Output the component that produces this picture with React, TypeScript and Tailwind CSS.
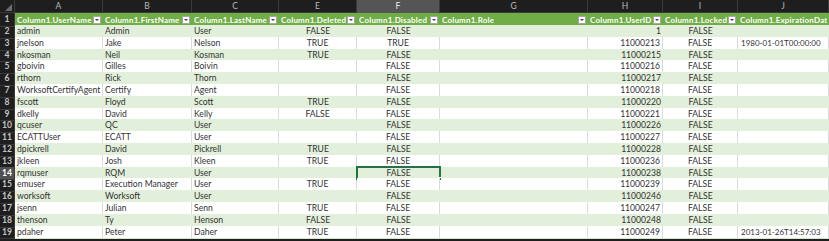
type Row = {
  n: number;
  a: string;
  b: string;
  c: string;
  e: string;
  f: string;
  h: string;
  i: string;
  j: string;
};

const rows: Row[] = [
  { n: 2, a: "admin", b: "Admin", c: "User", e: "FALSE", f: "FALSE", h: "1", i: "FALSE", j: "" },
  { n: 3, a: "jnelson", b: "Jake", c: "Nelson", e: "TRUE", f: "TRUE", h: "11000213", i: "FALSE", j: "1980-01-01T00:00:00" },
  { n: 4, a: "nkosman", b: "Neil", c: "Kosman", e: "TRUE", f: "FALSE", h: "11000215", i: "FALSE", j: "" },
  { n: 5, a: "gboivin", b: "Gilles", c: "Boivin", e: "", f: "FALSE", h: "11000216", i: "FALSE", j: "" },
  { n: 6, a: "rthorn", b: "Rick", c: "Thorn", e: "", f: "FALSE", h: "11000217", i: "FALSE", j: "" },
  { n: 7, a: "WorksoftCertifyAgent", b: "Certify", c: "Agent", e: "", f: "FALSE", h: "11000218", i: "FALSE", j: "" },
  { n: 8, a: "fscott", b: "Floyd", c: "Scott", e: "TRUE", f: "FALSE", h: "11000220", i: "FALSE", j: "" },
  { n: 9, a: "dkelly", b: "David", c: "Kelly", e: "FALSE", f: "FALSE", h: "11000221", i: "FALSE", j: "" },
  { n: 10, a: "qcuser", b: "QC", c: "User", e: "", f: "FALSE", h: "11000226", i: "FALSE", j: "" },
  { n: 11, a: "ECATTUser", b: "ECATT", c: "User", e: "", f: "FALSE", h: "11000227", i: "FALSE", j: "" },
  { n: 12, a: "dpickrell", b: "David", c: "Pickrell", e: "TRUE", f: "FALSE", h: "11000228", i: "FALSE", j: "" },
  { n: 13, a: "jkleen", b: "Josh", c: "Kleen", e: "TRUE", f: "FALSE", h: "11000236", i: "FALSE", j: "" },
  { n: 14, a: "rqmuser", b: "RQM", c: "User", e: "", f: "FALSE", h: "11000238", i: "FALSE", j: "" },
  { n: 15, a: "emuser", b: "Execution Manager", c: "User", e: "TRUE", f: "FALSE", h: "11000239", i: "FALSE", j: "" },
  { n: 16, a: "worksoft", b: "Worksoft", c: "User", e: "", f: "FALSE", h: "11000246", i: "FALSE", j: "" },
  { n: 17, a: "jsenn", b: "Julian", c: "Senn", e: "TRUE", f: "FALSE", h: "11000247", i: "FALSE", j: "" },
  { n: 18, a: "thenson", b: "Ty", c: "Henson", e: "FALSE", f: "FALSE", h: "11000248", i: "FALSE", j: "" },
  { n: 19, a: "pdaher", b: "Peter", c: "Daher", e: "TRUE", f: "FALSE", h: "11000249", i: "FALSE", j: "2013-01-26T14:57:03" },
];

const grid =
  "grid grid-cols-[15px_88px_89px_87px_78px_83px_148px_75px_75px_1fr]";

const letters = ["A", "B", "C", "E", "F", "G", "H", "I", "J"];
const headers = [
  "Column1.UserName",
  "Column1.FirstName",
  "Column1.LastName",
  "Column1.Deleted",
  "Column1.Disabled",
  "Column1.Role",
  "Column1.UserID",
  "Column1.Locked",
  "Column1.ExpirationDate",
];

const Dropdown = () => (
  <span className="flex h-[8px] w-[8px] shrink-0 items-center justify-center border border-[#a6a6a6] bg-white">
    <span className="h-0 w-0 border-l-[2px] border-r-[2px] border-t-[2.5px] border-l-transparent border-r-transparent border-t-[#444]" />
  </span>
);

const App = () => {
  return (
    <div className="h-[241px] w-[829px] overflow-hidden bg-[#1e1e1e] font-['Lato','Liberation_Sans',sans-serif] text-[8.6px]">
      {/* column letters */}
      <div className={`${grid} h-[13px] border-b border-[#3a3a3a]`}>
        <div className="flex items-end justify-end border-r border-[#3a3a3a] p-[2px]">
          <span className="h-0 w-0 border-b-[7px] border-l-[7px] border-b-[#6b6b6b] border-l-transparent" />
        </div>
        {letters.map((l) => (
          <div
            key={l}
            className={`flex items-center justify-center border-r border-[#3a3a3a] text-[8.5px] ${
              l === "F" ? "bg-[#555555] text-[#e8e8e8]" : "text-[#b8b8b8]"
            }`}
          >
            {l}
          </div>
        ))}
      </div>

      {/* table header row */}
      <div className={`${grid} h-[12px]`}>
        <div className="flex items-center justify-center border-b border-r border-[#3a3a3a] font-bold text-[#c4c4c4]">
          1
        </div>
        {headers.map((h, idx) => (
          <div
            key={h}
            className="flex items-center justify-between gap-[1px] overflow-hidden whitespace-nowrap bg-[#70ad47] pl-[2px] pr-[2px] text-[8px] font-bold tracking-[0.2px] text-white"
          >
            <span className="overflow-hidden">{h}</span>
            {idx < headers.length - 1 && <Dropdown />}
          </div>
        ))}
      </div>

      {rows.map((r) => {
        const green = r.n % 2 === 0;
        const sel = r.n === 14;
        const cell = green
          ? "bg-[#e2efda] border-b border-[#c9dfba]"
          : "bg-white border-r border-b border-r-[#dadada] border-b-[#d6e6cb]";
        return (
          <div key={r.n} className={`${grid} h-[11.8px] text-[#333333]`}>
            <div
              className={`flex items-center justify-center border-b border-r border-[#3a3a3a] font-bold ${
                sel ? "bg-[#505050] text-white" : "text-[#c4c4c4]"
              }`}
            >
              {r.n}
            </div>
            <div className={`${cell} flex items-center whitespace-nowrap pl-[2px]`}>{r.a}</div>
            <div className={`${cell} flex items-center whitespace-nowrap pl-[2px]`}>{r.b}</div>
            <div className={`${cell} flex items-center whitespace-nowrap pl-[2px]`}>{r.c}</div>
            <div className={`${cell} flex items-center justify-center`}>{r.e}</div>
            <div className={`${cell} relative flex items-center justify-center`}>
              {r.f}
              {sel && (
                <span className="absolute -bottom-px -left-px -right-px -top-px border-2 border-[#217346]">
                  <span className="absolute -bottom-[3px] -right-[3px] h-[4px] w-[4px] border border-white bg-[#217346]" />
                </span>
              )}
            </div>
            <div className={cell} />
            <div className={`${cell} flex items-center justify-end pr-[2px]`}>{r.h}</div>
            <div className={`${cell} flex items-center justify-center`}>{r.i}</div>
            <div className={`${cell} flex items-center whitespace-nowrap pl-[3px] text-[8px]`}>{r.j}</div>
          </div>
        );
      })}
    </div>
  );
};

export default App;
